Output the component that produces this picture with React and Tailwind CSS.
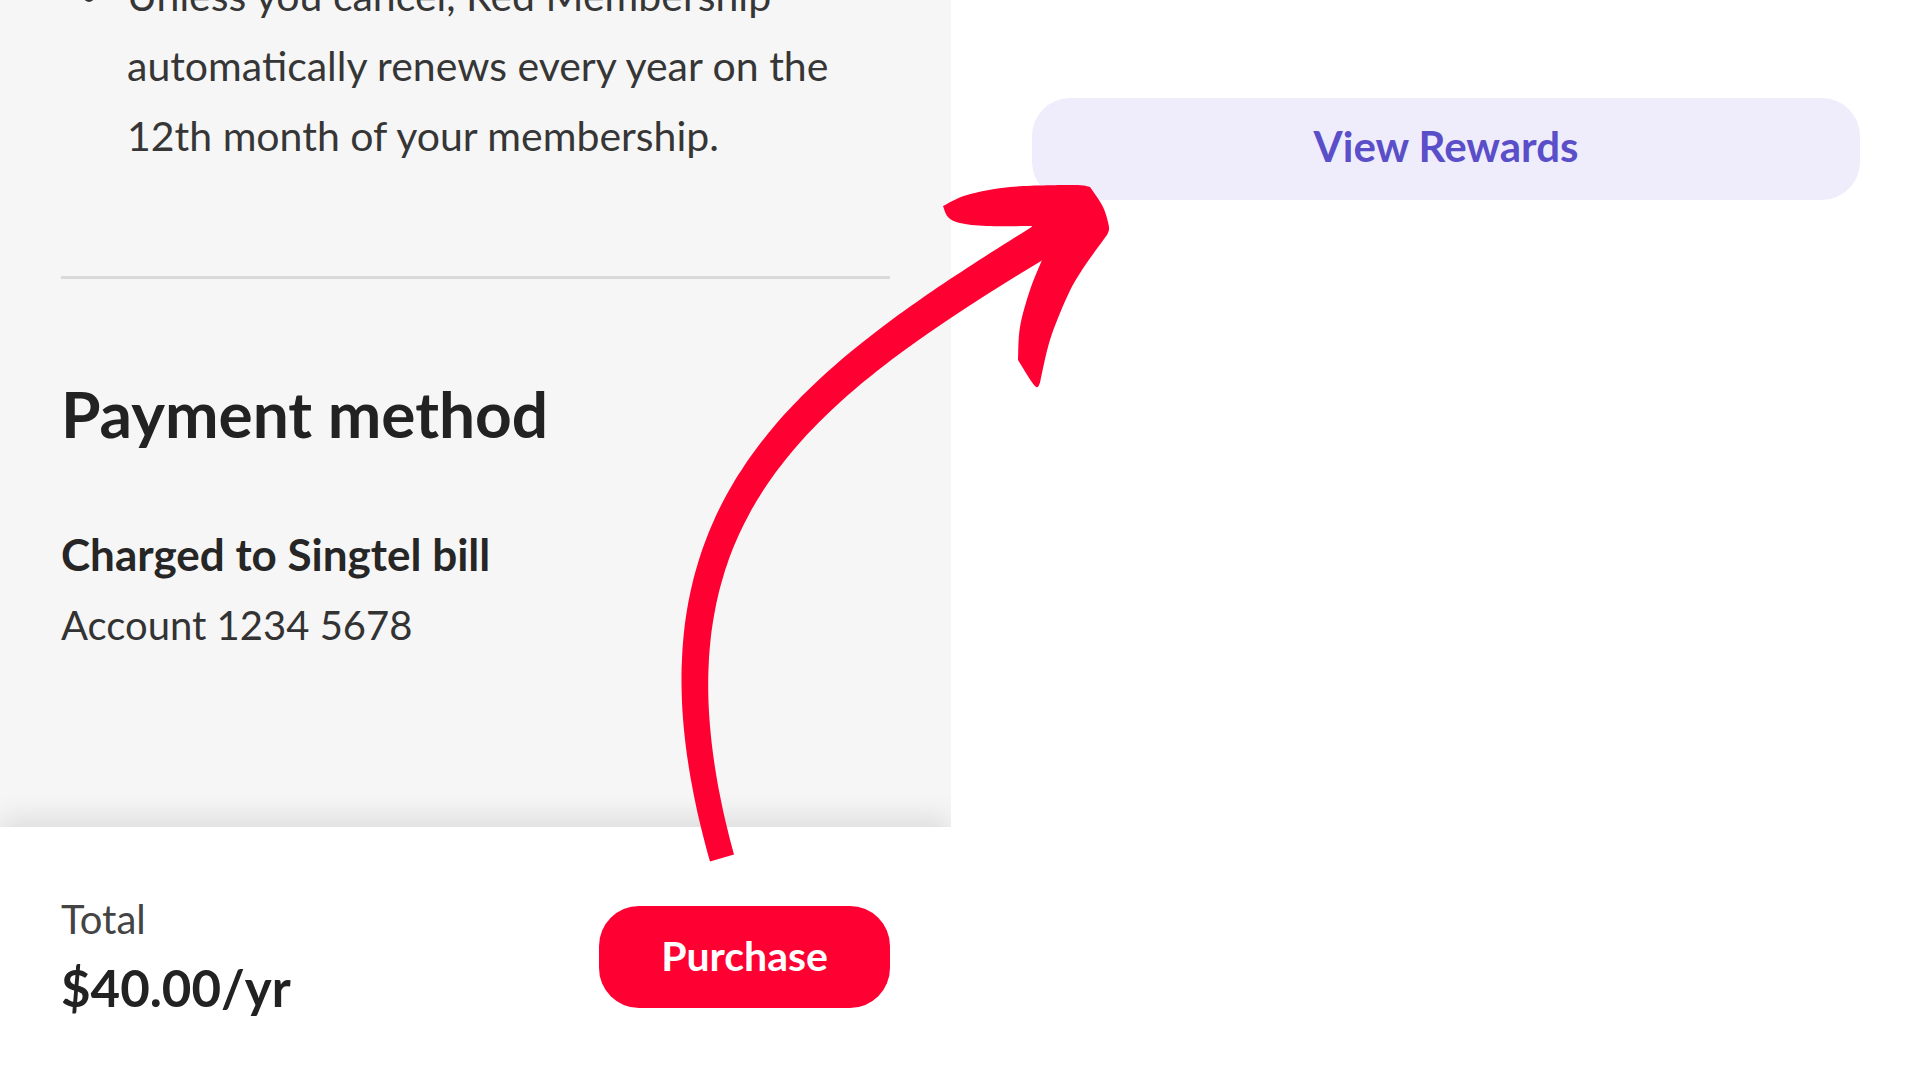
import React from "react";

const spline = (pts) => {
  let d = "";
  for (let i = 0; i < pts.length - 1; i++) {
    const p0 = pts[i - 1] || pts[i];
    const p1 = pts[i];
    const p2 = pts[i + 1];
    const p3 = pts[i + 2] || p2;
    const c1 = [p1[0] + (p2[0] - p0[0]) / 6, p1[1] + (p2[1] - p0[1]) / 6];
    const c2 = [p2[0] - (p3[0] - p1[0]) / 6, p2[1] - (p3[1] - p1[1]) / 6];
    d += ` C${c1} ${c2} ${p2}`;
  }
  return d;
};

// shaft: one cubic as centre line, widened like a brush stroke towards the top
const shaftPath = (() => {
  const P = [[722, 858], [625, 512], [800, 388], [1056, 232]];
  const at = (t, k) =>
    (1 - t) ** 3 * P[0][k] +
    3 * (1 - t) ** 2 * t * P[1][k] +
    3 * (1 - t) * t * t * P[2][k] +
    t ** 3 * P[3][k];
  const dt = (t, k) =>
    3 * (1 - t) ** 2 * (P[1][k] - P[0][k]) +
    6 * (1 - t) * t * (P[2][k] - P[1][k]) +
    3 * t * t * (P[3][k] - P[2][k]);
  const left = [];
  const right = [];
  const steps = 120;
  for (let i = 0; i <= steps; i++) {
    const t = i / steps;
    const tx = dt(t, 0);
    const ty = dt(t, 1);
    const len = Math.hypot(tx, ty) || 1;
    const nx = -ty / len;
    const ny = tx / len;
    const w = (25 + 9 * t) / 2;
    const x = at(t, 0);
    const y = at(t, 1);
    left.push([x + nx * w, y + ny * w]);
    right.push([x - nx * w, y - ny * w]);
  }
  const pts = [...left, ...right.reverse()];
  return (
    "M" + pts.map((p) => `${p[0].toFixed(1)},${p[1].toFixed(1)}`).join(" L") + " Z"
  );
})();

const headPath =
  "M1032,226" +
  spline([[1032, 226], [987, 226], [960, 223], [948, 217], [943, 206]]) +
  spline([[943, 206], [967, 195], [1010, 187], [1073, 185], [1090, 187]]) +
  spline([[1090, 187], [1103, 207], [1109, 227], [1107, 235]]) +
  spline([[1107, 235], [1082, 270], [1067, 297], [1050, 340], [1040, 383]]) +
  spline([[1040, 383], [1035, 386], [1018, 360]]) +
  spline([[1018, 360], [1020, 327], [1030, 290], [1042, 260]]) +
  " L1020,262 Z";

const Arrow = () => (
  <svg
    className="pointer-events-none absolute left-0 top-0"
    width="1920"
    height="1080"
    viewBox="0 0 1920 1080"
  >
    <path d={shaftPath} fill="#ff0033" />
    <path d={headPath} fill="#ff0033" />
  </svg>
);

const App = () => {
  return (
    <div className="relative flex h-[1080px] w-[1920px] overflow-hidden bg-white font-['Lato',sans-serif] text-[#2a2a2a]">
      <div className="flex h-full w-[951px] shrink-0 flex-col overflow-hidden">
        <div className="flex-1 bg-[#f6f6f6] px-[61px]">
          <div className="-mt-[39px] flex pl-[23px]">
            <span className="mt-[31px] h-[10px] w-[10px] shrink-0 rounded-full bg-[#333]" />
            <p className="ml-[33px] text-[41px] leading-[70px] text-[#363636]">
              Unless you cancel, Red Membership
              <br />
              automatically renews every year on the
              <br />
              12th month of your membership.
            </p>
          </div>

          <div className="mt-[105px] h-[3px] w-full bg-[#dadada]" />

          <h2 className="mt-[98px] text-[64px] font-bold leading-[74px] text-[#222]">
            Payment method
          </h2>

          <div className="mt-[77px] text-[44px] font-bold leading-[52px] text-[#262626]">
            Charged to Singtel bill
          </div>
          <div className="mt-[21px] text-[40px] leading-[48px] text-[#333]">
            Account 1234 5678
          </div>
        </div>

        <div className="relative flex h-[253px] shrink-0 items-center justify-between bg-white px-[61px] pt-[7px] shadow-[0_-10px_26px_rgba(0,0,0,0.1)]">
          <div className="flex flex-col gap-[14px]">
            <span className="text-[40px] leading-[48px] text-[#444]">Total</span>
            <span className="text-[51px] font-bold leading-[62px] text-[#222]">
              $40.00/yr
            </span>
          </div>
          <button className="flex h-[102px] w-[291px] items-center justify-center rounded-[40px] bg-[#ff0033] pb-[3px] text-[41px] font-bold text-white">
            Purchase
          </button>
        </div>
      </div>

      <div className="flex-1 pl-[81px] pr-[60px] pt-[98px]">
        <button className="flex h-[102px] w-full items-center justify-center rounded-[38px] bg-[#efedfc] pb-[6px] text-[42px] font-bold text-[#5a4fc8]">
          View Rewards
        </button>
      </div>

      <Arrow />
    </div>
  );
};

export default App;
